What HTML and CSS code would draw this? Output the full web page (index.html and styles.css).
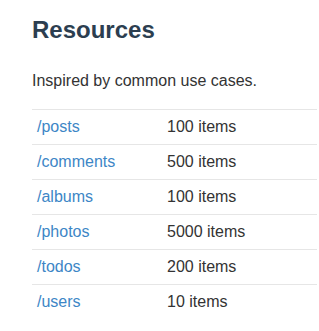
FILE: index.html
```html
<!DOCTYPE html>
<html>
<head>
<meta charset="utf-8">
<link rel="stylesheet" href="styles.css">
</head>
<body>
<section class="resources">
  <h2 class="title">Resources</h2>
  <p class="lead">Inspired by common use cases.</p>
  <table class="res-table">
    <tbody>
      <tr><td class="path"><a href="#">/posts</a></td><td class="count">100 items</td></tr>
      <tr><td class="path"><a href="#">/comments</a></td><td class="count">500 items</td></tr>
      <tr><td class="path"><a href="#">/albums</a></td><td class="count">100 items</td></tr>
      <tr><td class="path"><a href="#">/photos</a></td><td class="count">5000 items</td></tr>
      <tr><td class="path"><a href="#">/todos</a></td><td class="count">200 items</td></tr>
      <tr><td class="path"><a href="#">/users</a></td><td class="count">10 items</td></tr>
    </tbody>
  </table>
</section>
</body>
</html>
```

FILE: styles.css
```css
html, body {
  margin: 0;
  padding: 0;
  background: #fff;
}
body {
  font-family: "Liberation Sans", Arial, Helvetica, sans-serif;
  font-size: 16px;
  color: #333;
}
.resources {
  padding: 16.5px 2px 0 32px;
}
.title {
  margin: 0;
  font-size: 24px;
  line-height: 26.4px;
  font-weight: bold;
  color: #2c3e50;
}
.lead {
  margin: 25.6px 0 16px;
  line-height: 24px;
}
.res-table {
  width: 285px;
  border-collapse: collapse;
}
.res-table td {
  padding: 5px;
  line-height: 24px;
  border-top: 1px solid #e6e6e6;
  vertical-align: top;
}
.res-table .path {
  width: 120px;
}
.res-table a {
  color: #3d86c6;
  text-decoration: none;
}
```
